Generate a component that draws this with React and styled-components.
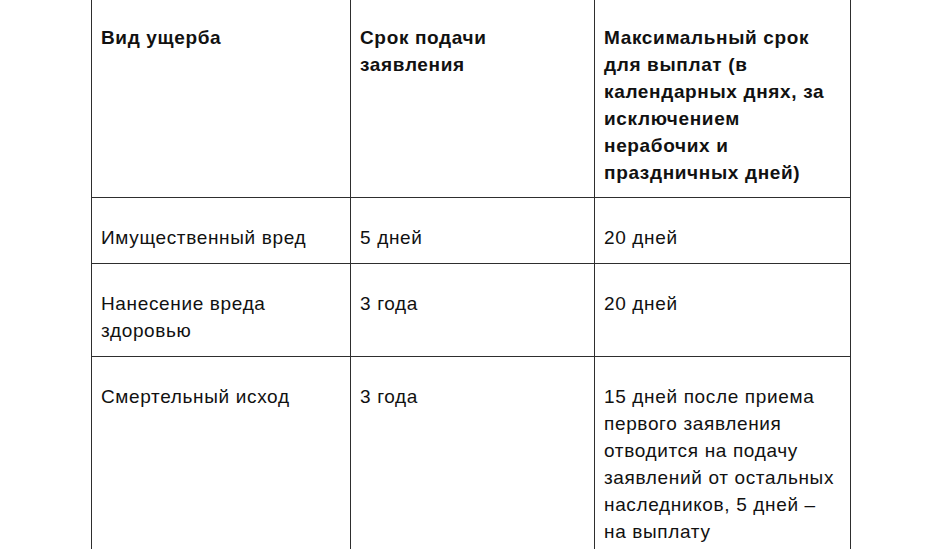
import React from "react";
import styled, { createGlobalStyle } from "styled-components";

const GlobalStyle = createGlobalStyle`
    html, body {
        margin: 0;
        padding: 0;
        background: #ffffff;
    }
    body {
        font-family: "Liberation Sans", Arial, sans-serif;
        color: #111111;
    }
`;

const Page = styled.div`
    width: 945px;
    height: 549px;
    overflow: hidden;
    padding-left: 91px;
    box-sizing: border-box;
`;

const Table = styled.table`
    border-collapse: collapse;
    table-layout: fixed;
    width: 759px;
    font-size: 19px;
    letter-spacing: 0.65px;
    line-height: 27px;
`;

const Cell = styled.td`
    border: 1px solid #2e2e2e;
    border-top: ${(p) => (p.$head ? "none" : "1px solid #2e2e2e")};
    vertical-align: top;
    padding: ${(p) => (p.$head ? "24px 8px 11px 9px" : "26px 8px 12px 9px")};
    font-weight: ${(p) => (p.$head ? 700 : 400)};
    color: #111111;
`;

const rows = [
    ["Имущественный вред", "5 дней", "20 дней"],
    ["Нанесение вреда здоровью", "3 года", "20 дней"],
    [
        "Смертельный исход",
        "3 года",
        "15 дней после приема первого заявления отводится на подачу заявлений от остальных наследников, 5 дней – на выплату",
    ],
];

function App() {
    return (
        <Page>
            <GlobalStyle />
            <Table>
                <colgroup>
                    <col style={{ width: 259 }} />
                    <col style={{ width: 244 }} />
                    <col style={{ width: 256 }} />
                </colgroup>
                <tbody>
                    <tr>
                        <Cell $head>Вид ущерба</Cell>
                        <Cell $head>Срок подачи заявления</Cell>
                        <Cell $head>
                            Максимальный срок для выплат (в календарных днях, за
                            исключением нерабочих и праздничных дней)
                        </Cell>
                    </tr>
                    {rows.map((r, i) => (
                        <tr key={i}>
                            {r.map((t, j) => (
                                <Cell key={j}>{t}</Cell>
                            ))}
                        </tr>
                    ))}
                </tbody>
            </Table>
        </Page>
    );
}

export default App;
